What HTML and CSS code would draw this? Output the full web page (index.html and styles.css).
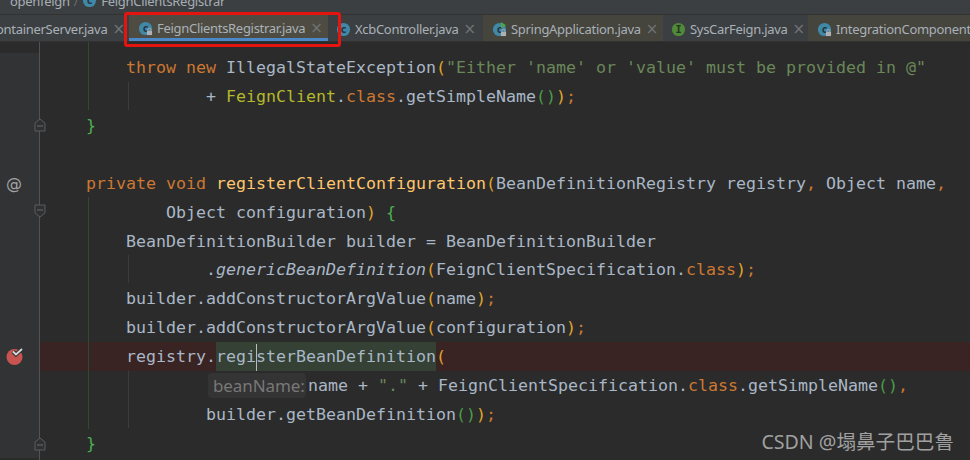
FILE: index.html
```html
<!DOCTYPE html>
<html lang="en">
<head>
<meta charset="utf-8">
<title>FeignClientsRegistrar.java</title>
<link rel="stylesheet" href="styles.css">
</head>
<body>
<div class="ide">
  <div class="crumbs">
    <span>openfeign</span><span class="sep">/</span>
    <svg class="ic" viewBox="0 0 16 16"><circle cx="8" cy="8" r="7" fill="#3f88a8"/><text x="8" y="11.5" class="ic-t" fill="#26323a">c</text></svg>
    <span>FeignClientsRegistrar</span>
  </div>
  <div class="tabs">
    <div class="tab first"><span>ContainerServer.java</span><i class="x">×</i></div>
    <div class="tab active">
      <svg class="ic" viewBox="0 0 16 16"><circle cx="8" cy="8" r="7" fill="#3f88a8"/><text x="8" y="11.5" class="ic-t" fill="#26323a">c</text><path d="M10.5 10.5V9.5a1.7 1.7 0 0 1 3.4 0v1" fill="none" stroke="#aeb1b3"/><rect x="9.5" y="10.5" width="5.5" height="4.5" fill="#aeb1b3"/></svg>
      <span>FeignClientsRegistrar.java</span><i class="x">×</i>
    </div>
    <div class="tab xcb">
      <svg class="ic" viewBox="0 0 16 16"><circle cx="8" cy="8" r="7" fill="#3f88a8"/><text x="8" y="11.5" class="ic-t" fill="#26323a">c</text></svg>
      <span>XcbController.java</span><i class="x">×</i>
    </div>
    <div class="tab tinted spring">
      <svg class="ic" viewBox="0 0 16 16"><circle cx="8" cy="8" r="7" fill="#3f88a8"/><text x="8" y="11.5" class="ic-t" fill="#26323a">c</text><path d="M9.5 0l5.5 3.5-5.5 3.5z" fill="#4fa64a"/><path d="M10.5 10.5V9.5a1.7 1.7 0 0 1 3.4 0v1" fill="none" stroke="#aeb1b3"/><rect x="9.5" y="10.5" width="5.5" height="4.5" fill="#aeb1b3"/></svg>
      <span>SpringApplication.java</span><i class="x">×</i>
    </div>
    <div class="tab sys">
      <svg class="ic" viewBox="0 0 16 16"><circle cx="8" cy="8" r="7" fill="#4f8a3a"/><text x="8" y="11.5" class="ic-t" fill="#26321f">I</text></svg>
      <span>SysCarFeign.java</span><i class="x">×</i>
    </div>
    <div class="tab tinted last">
      <svg class="ic" viewBox="0 0 16 16"><circle cx="8" cy="8" r="7" fill="#3f88a8"/><text x="8" y="11.5" class="ic-t" fill="#26323a">c</text><path d="M10.5 10.5V9.5a1.7 1.7 0 0 1 3.4 0v1" fill="none" stroke="#aeb1b3"/><rect x="9.5" y="10.5" width="5.5" height="4.5" fill="#aeb1b3"/></svg>
      <span>IntegrationComponentScan.java</span>
    </div>
  </div>
  <div class="editor">
    <div class="guide g1 a"></div>
    <div class="guide g1 b"></div>
    <div class="guide g2 a"></div>
    <div class="guide g2 m"></div>
    <div class="guide g2 b"></div>
    <div class="rail"></div>

    <div class="line"><div class="gut"></div><code class="i4"><b>throw new </b>IllegalStateException<span class="p1">(</span><s>"Either 'name' or 'value' must be provided in @"</s></code></div>
    <div class="line"><div class="gut"></div><code class="i12">+ <em class="cls">FeignClient</em>.<b>class</b>.getSimpleName<span class="p2">()</span><span class="p1">)</span><b>;</b></code></div>
    <div class="line"><div class="gut"><svg class="fold" viewBox="0 0 12 14"><path d="M1 13V5l5-4 5 4v8z" fill="#2f3133" stroke="#5b5d5f"/><path d="M3 8h6" stroke="#6b6d6f"/></svg></div><code class="i0"><u>}</u></code></div>
    <div class="line"><div class="gut"></div><code class="i0"></code></div>
    <div class="line"><div class="gut"><span class="at">@</span></div><code class="i0"><b>private void </b><em>registerClientConfiguration</em><span class="p1">(</span>BeanDefinitionRegistry registry<b>,</b> Object name<b>,</b></code></div>
    <div class="line"><div class="gut"><svg class="fold down" viewBox="0 0 12 14"><path d="M1 1v8l5 4 5-4V1z" fill="#2f3133" stroke="#5b5d5f"/><path d="M3 6h6" stroke="#6b6d6f"/></svg></div><code class="i8">Object configuration<span class="p1">)</span> <u>{</u></code></div>
    <div class="line"><div class="gut"></div><code class="i4">BeanDefinitionBuilder builder = BeanDefinitionBuilder</code></div>
    <div class="line"><div class="gut"></div><code class="i12">.<em class="it">genericBeanDefinition</em><span class="p1">(</span>FeignClientSpecification.<b>class</b><span class="p1">)</span><b>;</b></code></div>
    <div class="line"><div class="gut"></div><code class="i4">builder.addConstructorArgValue<span class="p1">(</span>name<span class="p1">)</span><b>;</b></code></div>
    <div class="line"><div class="gut"></div><code class="i4">builder.addConstructorArgValue<span class="p1">(</span>configuration<span class="p1">)</span><b>;</b></code></div>
    <div class="line hit"><div class="gut"><svg class="bp" viewBox="0 0 18 18"><circle cx="8.5" cy="9" r="8" fill="#c75450"/><path d="M7 3.5l3 3 6-5.5" fill="none" stroke="#313335" stroke-width="4"/><path d="M7 3.5l3 3 6-5.5" fill="none" stroke="#d8d8d8" stroke-width="1.8"/></svg></div><code class="i4">registry.<span class="sel">regi<span class="caret"></span>sterBeanDefinition</span><span class="p1">(</span></code></div>
    <div class="line"><div class="gut"></div><code class="i12 hinted"><span class="hint">beanName:</span>name + <s>"."</s> + FeignClientSpecification.<b>class</b>.getSimpleName<span class="p2">()</span><b>,</b></code></div>
    <div class="line"><div class="gut"></div><code class="i12">builder.getBeanDefinition<span class="p2">()</span><span class="p1">)</span><b>;</b></code></div>
    <div class="line"><div class="gut"><svg class="fold" viewBox="0 0 12 14"><path d="M1 13V5l5-4 5 4v8z" fill="#2f3133" stroke="#5b5d5f"/><path d="M3 8h6" stroke="#6b6d6f"/></svg></div><code class="i0"><u>}</u></code></div>

    <div class="mark">CSDN @塌鼻子巴巴鲁</div>
  </div>
  <div class="callout"></div>
</div>
</body>
</html>
```

FILE: styles.css
```css
* { box-sizing: border-box; }
html, body { margin: 0; padding: 0; background: #2b2b2b; }
.ide { position: relative; width: 970px; height: 460px; overflow: hidden; display: flex; flex-direction: column; font-family: "Noto Sans", "Open Sans", sans-serif; }

.crumbs { height: 15px; flex: none; background: #3c3f41; border-bottom: 1px solid #323232; display: flex; align-items: flex-end; gap: 4px; padding: 0 0 6px 10px; color: #a6aeb5; font-size: 13px; letter-spacing: -0.3px; line-height: 14px; overflow: hidden; }
.crumbs .sep { color: #686b6e; }
.ic { width: 15px; height: 15px; flex: none; }
.ic-t { font: bold 11px "DejaVu Sans Mono", monospace; text-anchor: middle; }

.tabs { height: 27px; flex: none; background: #3c3f41; border-bottom: 1px solid #323232; display: flex; overflow: hidden; color: #a9b1b8; font-size: 13px; }
.tab { flex: none; display: flex; align-items: center; height: 26px; padding: 2px 6px 0 9px; gap: 4px; white-space: nowrap; }
.tab span { letter-spacing: -0.3px; }
.x { font-style: normal; font-family: "DejaVu Sans", sans-serif; font-size: 15px; color: #6f7376; margin-left: 1px; }
.first { width: 129px; padding-left: 0; justify-content: flex-end; padding-right: 4px; }
.active { width: 199px; background: #4e4c42; border-bottom: 3px solid #4a88c7; padding-top: 3px; }
.xcb { width: 155px; padding-left: 8px; }
.tinted { background: #45443d; }
.spring { width: 180px; }
.sys { width: 145px; padding-left: 8px; }
.last { width: 162px; padding-right: 0; overflow: hidden; }

.editor { position: relative; flex: 1; padding-top: 10.7px; background: #2b2b2b; }
.line { display: flex; height: 28.97px; }
.gut { width: 40px; flex: none; background: #313335; display: flex; align-items: center; }
.line code { flex: 1; display: block; white-space: pre; font-family: "DejaVu Sans Mono", monospace; font-size: 16.63px; line-height: 29px; color: #a9b7c6; }
.i0 { padding-left: 46px; }
.i4 { padding-left: 86px; }
.i8 { padding-left: 126px; }
.i12 { padding-left: 166px; }
.line b { font-weight: normal; color: #cc7832; }
.line em { font-style: normal; color: #ffc66d; }
.line em.cls { color: #b5b82c; }
.line em.it { font-style: italic; color: #a9b7c6; }
.line s { text-decoration: none; color: #6a8759; }
.line u { text-decoration: none; color: #4caf50; }
.p1 { color: #e0a52c; }
.p2 { color: #4a9d4a; }
.hit { background: #3a2323; }
.sel { background: #344134; display: inline-block; height: 29px; }
.caret { display: inline-block; width: 1px; height: 27px; margin: 0 -0.5px; background: #bbb; vertical-align: middle; }
.line code.hinted { display: flex; align-items: center; padding-left: 168px; }
.hint { font: 17px/25px "Noto Sans", sans-serif; color: #787878; background: #343434; border-radius: 4px; padding: 0 0 0 5px; width: 98px; margin-right: 2px; flex: none; overflow: hidden; letter-spacing: -0.1px; }
.fold { width: 12px; height: 14px; flex: none; margin-left: 34px; position: relative; z-index: 1; }
.fold.down { margin-top: -3px; }
.at { font: 16px "DejaVu Sans", sans-serif; color: #a4a4a4; margin-left: 6px; }
.bp { width: 18px; height: 18px; flex: none; margin-left: 6px; }

.guide { position: absolute; width: 1px; }
.rail { position: absolute; left: 39px; top: 0; bottom: 0; width: 1px; background: #505254; }
.g1 { left: 88px; background: #2f4a30; }
.g1.a { top: 0; height: 68px; }
.g1.b { top: 155px; height: 232px; }
.g2 { left: 128px; background: #3c3c3c; }
.g2.a { top: 40px; height: 28px; }
.g2.m { top: 213px; height: 28px; }
.g2.b { top: 329px; height: 57px; }

.mark { position: absolute; right: 16px; bottom: 6px; color: #a0a0a0; font-size: 19.6px; line-height: 24px; font-family: "Noto Sans", "Noto Sans CJK SC", sans-serif; }
.callout { position: absolute; left: 124px; top: 12px; width: 217px; height: 35px; border: 3px solid #e5140f; border-radius: 3px; }
```
